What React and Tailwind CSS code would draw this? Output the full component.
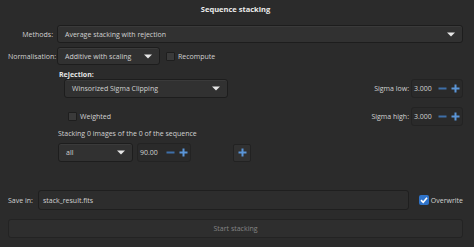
import React from 'react';

const font = { fontFamily: '"Open Sans", "Liberation Sans", sans-serif' };

function Arrow() {
  return (
    <svg width="8" height="5" viewBox="0 0 8 5" className="shrink-0">
      <path d="M0 0.5 H8 L4 4.5 Z" fill="#e6e6e6" />
    </svg>
  );
}

function Minus() {
  return (
    <svg width="9" height="9" viewBox="0 0 9 9">
      <rect x="0.5" y="3.5" width="8" height="2" fill="#3e6fa8" />
    </svg>
  );
}

function Plus() {
  return (
    <svg width="9" height="9" viewBox="0 0 9 9">
      <rect x="0.5" y="3.5" width="8" height="2" fill="#5b95d8" />
      <rect x="3.5" y="0.5" width="2" height="8" fill="#5b95d8" />
    </svg>
  );
}

function Combo({ label, className }) {
  return (
    <div className={`flex items-center justify-between h-[18px] px-[7px] rounded-[3px] border border-[#1d1d1d] bg-[#313131] shadow-[inset_0_1px_0_#3a3a3a] ${className}`}>
      <span>{label}</span>
      <Arrow />
    </div>
  );
}

function Spin({ value, className }) {
  return (
    <div className={`flex items-center h-[19px] pl-[2px] pr-[2px] rounded-[3px] border border-[#232323] bg-[#2a2a2a] ${className}`}>
      <span className="flex-1">{value}</span>
      <div className="flex items-center gap-[4px]">
        <Minus />
        <Plus />
      </div>
    </div>
  );
}

function Check({ checked }) {
  if (checked) {
    return (
      <div className="w-[10px] h-[10px] rounded-[2px] bg-[#2f73c9] flex items-center justify-center">
        <svg width="8" height="8" viewBox="0 0 8 8">
          <path d="M1 4.2 L3.2 6.3 L7 1.8" stroke="#ffffff" strokeWidth="1.6" fill="none" />
        </svg>
      </div>
    );
  }
  return <div className="w-[9px] h-[9px] rounded-[1px] border border-[#1e1e1e] bg-[#3a3a3a]" />;
}

export default function App() {
  return (
    <div style={font} className="w-[474px] h-[247px] bg-[#2b2b2b] text-[#d2d2d2] text-[7px] leading-none overflow-hidden flex flex-col pl-[8px] pr-[11px]">
      <div className="h-[19px] flex items-center justify-center font-bold text-[#ececec] text-[7.5px] pt-[1px]">
        Sequence stacking
      </div>

      <div className="flex items-center mt-[6px]">
        <div className="w-[46px] text-right pr-[1px]">Methods:</div>
        <Combo label="Average stacking with rejection" className="ml-[3px] flex-1" />
      </div>

      <div className="flex items-center mt-[4px]">
        <div className="w-[46px] text-right pr-[1px]">Normalisation:</div>
        <Combo label="Additive with scaling" className="ml-[3px] w-[103px]" />
        <div className="ml-[6px] mr-[3px]"><Check /></div>
        <span>Recompute</span>
      </div>

      <div className="ml-[50px] flex flex-col">
        <div className="font-bold text-[#e4e4e4] mt-[6px] ml-[1px]">Rejection:</div>
        <div className="flex justify-between mt-[1px]">
          <div className="flex flex-col pl-[6px]">
            <Combo label="Winsorized Sigma Clipping" className="w-[164px] h-[19px]" />
            <div className="flex items-center mt-[14px] ml-[4px] gap-[3px]">
              <Check />
              <span>Weighted</span>
            </div>
          </div>
          <div className="flex flex-col gap-[9px] items-end">
            <div className="flex items-center gap-[2px]">
              <span>Sigma low:</span>
              <Spin value="3.000" className="w-[52px]" />
            </div>
            <div className="flex items-center gap-[2px]">
              <span>Sigma high:</span>
              <Spin value="3.000" className="w-[52px]" />
            </div>
          </div>
        </div>
        <div className="mt-[4px]">Stacking 0 images of the 0 of the sequence</div>
        <div className="flex items-center mt-[6px]">
          <Combo label="all" className="w-[75px] h-[19px]" />
          <Spin value="90.00" className="ml-[4px] w-[54px]" />
          <div className="ml-[42px] w-[18px] h-[18px] rounded-[2px] border border-[#222] bg-[#313131] flex items-center justify-center">
            <Plus />
          </div>
        </div>
      </div>

      <div className="flex items-center mt-[28px]">
        <span className="w-[30px]">Save in:</span>
        <div className="w-[372px] h-[20px] flex items-center px-[4px] rounded-[3px] border border-[#1f1f1f] bg-[#2d2d2d]">
          stack_result.fits
        </div>
        <div className="ml-[10px] mr-[2px]"><Check checked /></div>
        <span>Overwrite</span>
      </div>

      <div className="mt-[9px] h-[19px] flex items-center justify-center rounded-[3px] border border-[#232323] bg-[#2e2e2e] text-[#858585]">
        Start stacking
      </div>
    </div>
  );
}
